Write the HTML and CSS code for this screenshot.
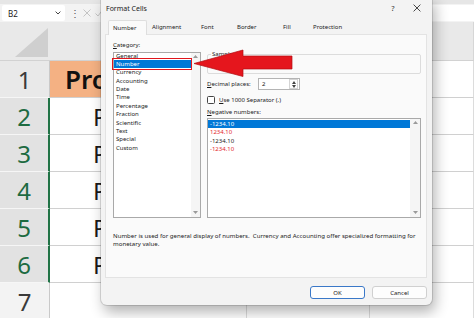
FILE: index.html
```html
<!DOCTYPE html>
<html>
<head>
<meta charset="utf-8">
<title>Format Cells</title>
<link rel="stylesheet" href="styles.css">
</head>
<body>
<div class="sheet">
  <div class="topstrip"></div>
  <div class="fbar">
    <div class="namebox"><span>B2</span>
      <svg class="chev" width="6" height="4" viewBox="0 0 6 4"><path d="M0.6 0.6 L3 3 L5.4 0.6" fill="none" stroke="#444" stroke-width="1"/></svg>
    </div>
    <span class="dots">⋮</span>
    <svg class="fxx" width="8" height="8" viewBox="0 0 8 8"><path d="M0.5 0.5 L7.5 7.5 M7.5 0.5 L0.5 7.5" stroke="#c4c4c4" stroke-width="1"/></svg>
    <svg class="fxv" width="8" height="8" viewBox="0 0 8 8"><path d="M0.5 4.5 L3 7 L7.5 1" fill="none" stroke="#c4c4c4" stroke-width="1"/></svg>
    <div class="finput"></div>
  </div>
  <div class="colhead">
    <div class="corner">
      <svg width="50" height="38" viewBox="0 0 50 38"><polygon points="48,6 48,35 15,35" fill="#cfcfcf"/></svg>
    </div>
    <div class="ch c1"></div><div class="ch c2"></div><div class="ch c3"></div>
  </div>
  <div class="row r1"><div class="rh">1</div><div class="cell c1 head">Product</div><div class="cell c2"></div><div class="cell c3"></div></div>
  <div class="row sel"><div class="rh">2</div><div class="cell c1 txt">Product A</div><div class="cell c2"></div><div class="cell c3"></div></div>
  <div class="row sel"><div class="rh">3</div><div class="cell c1 txt">Product B</div><div class="cell c2"></div><div class="cell c3"></div></div>
  <div class="row sel"><div class="rh">4</div><div class="cell c1 txt">Product C</div><div class="cell c2"></div><div class="cell c3"></div></div>
  <div class="row sel"><div class="rh">5</div><div class="cell c1 txt">Product D</div><div class="cell c2"></div><div class="cell c3"></div></div>
  <div class="row sel"><div class="rh">6</div><div class="cell c1 txt">Product E</div><div class="cell c2"></div><div class="cell c3"></div></div>
  <div class="row r7"><div class="rh">7</div><div class="cell c1"></div><div class="cell c2"></div><div class="cell c3"></div></div>
</div>

<div class="dialog">
  <div class="titlebar">
    <span class="title">Format Cells</span>
    <span class="help">?</span>
    <svg class="close" width="8" height="8" viewBox="0 0 8 8"><path d="M0.6 0.6 L7.4 7.4 M7.4 0.6 L0.6 7.4" stroke="#333" stroke-width="0.9"/></svg>
  </div>
  <div class="tabs">
    <div class="tab t1 sel">Number</div>
    <div class="tab t2">Alignment</div>
    <div class="tab t3">Font</div>
    <div class="tab t4">Border</div>
    <div class="tab t5">Fill</div>
    <div class="tab t6">Protection</div>
  </div>
  <div class="panel">
    <div class="cols">
      <div class="catcol">
        <div class="lbl"><u>C</u>ategory:</div>
        <div class="list catlist">
          <div class="items cat">
            <div class="it">General</div>
            <div class="it on">Number</div>
            <div class="it">Currency</div>
            <div class="it">Accounting</div>
            <div class="it">Date</div>
            <div class="it">Time</div>
            <div class="it">Percentage</div>
            <div class="it">Fraction</div>
            <div class="it">Scientific</div>
            <div class="it">Text</div>
            <div class="it">Special</div>
            <div class="it">Custom</div>
          </div>
          <div class="sbar">
            <svg width="5" height="3" viewBox="0 0 5 3"><polygon points="2.5,0 5,3 0,3" fill="#9a9a9a"/></svg>
            <svg width="5" height="3" viewBox="0 0 5 3"><polygon points="0,0 5,0 2.5,3" fill="#9a9a9a"/></svg>
          </div>
        </div>
      </div>
      <div class="rightcol">
        <div class="sample"><span class="legend">Sample</span></div>
        <div class="decrow">
          <span class="declbl"><u>D</u>ecimal places:</span>
          <div class="spin">
            <span class="val">2</span>
            <div class="spinbtns">
              <span class="sb"><svg width="4" height="3" viewBox="0 0 4 3"><polygon points="2,0 4,3 0,3" fill="#444"/></svg></span>
              <span class="sb"><svg width="4" height="3" viewBox="0 0 4 3"><polygon points="0,0 4,0 2,3" fill="#444"/></svg></span>
            </div>
          </div>
        </div>
        <div class="chkrow"><span class="chk"></span><span><u>U</u>se 1000 Separator (,)</span></div>
        <div class="lbl neglbl"><u>N</u>egative numbers:</div>
        <div class="list neglist">
          <div class="items neg">
            <div class="it on">-1234.10</div>
            <div class="it red">1234.10</div>
            <div class="it">-1234.10</div>
            <div class="it red">-1234.10</div>
          </div>
          <div class="sbar wide">
            <svg width="5" height="3" viewBox="0 0 5 3"><polygon points="2.5,0 5,3 0,3" fill="#9a9a9a"/></svg>
            <svg width="5" height="3" viewBox="0 0 5 3"><polygon points="0,0 5,0 2.5,3" fill="#9a9a9a"/></svg>
          </div>
        </div>
      </div>
    </div>
    <p class="desc">Number is used for general display of numbers.&nbsp; Currency and Accounting offer specialized formatting for<br>monetary value.</p>
  </div>
  <div class="footer">
    <button class="btn ok">OK</button>
    <button class="btn">Cancel</button>
  </div>
</div>

<div class="redbox"></div>
<svg class="arrow" width="104" height="32" viewBox="0 0 104 32">
  <polygon points="2,15.5 51,2 51,8 100,8 100,21 51,21 51,28.5" fill="#e5161d" stroke="#b10d12" stroke-width="0.7" stroke-linejoin="miter"/>
</svg>
</body>
</html>
```

FILE: styles.css
```css
* { box-sizing: border-box; }

body {
  margin: 0;
  width: 474px;
  height: 318px;
  overflow: hidden;
  position: relative;
  background: #ffffff;
  font-family: "Noto Sans", "Open Sans", sans-serif;
}

/* ---------- spreadsheet background ---------- */
.sheet {
  display: flex;
  flex-direction: column;
}

.topstrip {
  height: 4px;
  background: #e6e6e6;
}

.fbar {
  height: 18px;
  display: flex;
  align-items: center;
  background: #f3f3f3;
}

.namebox {
  width: 63px;
  height: 16px;
  margin-left: 2px;
  background: #ffffff;
  border-radius: 2px;
  display: flex;
  align-items: center;
  justify-content: space-between;
  padding: 0 4px 0 6px;
  font-size: 8px;
  color: #222;
}

.dots {
  margin-left: 5px;
  font-size: 10px;
  color: #555;
  width: 6px;
}

.fxx { margin-left: 7px; }
.fxv { margin-left: 4px; }

.finput {
  flex: 1;
  height: 16px;
  margin-left: 10px;
  background: #ffffff;
}

.colhead {
  height: 39px;
  display: flex;
  background: #e9e9e9;
  border-bottom: 1px solid #d2d2d2;
}

.corner {
  width: 50px;
  display: flex;
  align-items: flex-end;
}

.ch { border-right: 1px solid #d6d6d6; }
.c1 { width: 197px; }
.c2 { width: 123px; }
.c3 { flex: 1; }

.row {
  height: 37px;
  display: flex;
}

.rh {
  width: 50px;
  display: flex;
  align-items: center;
  justify-content: center;
  font-size: 24px;
  color: #3a3a3a;
  background: #e9e9e9;
  border-bottom: 1px solid #f6f6f6;
  border-right: 1px solid #c9c9c9;
}

.row.sel .rh {
  color: #1d6b41;
  background: #e2e2e2;
  border-right: 2px solid #217346;
}

.row.r7 .rh { background: #f3f3f3; }

.cell {
  border-right: 1px solid #dcdcdc;
  border-bottom: 1px solid #d0d0d0;
  display: flex;
  align-items: center;
  white-space: nowrap;
  overflow: hidden;
}

.cell.head {
  background: #f4b183;
  padding-left: 15px;
  font-size: 26px;
  font-weight: 600;
  color: #111;
}

.cell.txt {
  padding-left: 43px;
  font-size: 24px;
  color: #1a1a1a;
}

/* ---------- dialog ---------- */
.dialog {
  position: absolute;
  left: 101px;
  top: -4px;
  width: 331px;
  height: 309px;
  background: #f3f3f3;
  border-radius: 0 0 6px 6px;
  box-shadow: 0 0 0 1px rgba(0, 0, 0, 0.12), 3px 7px 14px rgba(0, 0, 0, 0.3);
  display: flex;
  flex-direction: column;
  font-size: 6px;
  color: #1b1b1b;
}

.titlebar {
  height: 24px;
  display: flex;
  align-items: center;
  padding-left: 5px;
}

.title {
  flex: 1;
  font-size: 7px;
}

.help {
  width: 12px;
  margin-right: 14px;
  text-align: center;
  font-size: 7.5px;
  color: #333;
}

.close {
  margin-right: 11px;
}

.tabs {
  height: 14px;
  display: flex;
  padding-left: 7px;
}

.tab {
  display: flex;
  align-items: center;
  padding-left: 5px;
  white-space: nowrap;
}

.tab.sel {
  padding-left: 4px;
  background: #fafafa;
  border: 1px solid #dedede;
  border-bottom: none;
  border-radius: 2px 2px 0 0;
  margin-bottom: -1px;
  position: relative;
  z-index: 1;
}

.t1 { width: 39px; }
.t2 { width: 49px; }
.t3 { width: 36px; }
.t4 { width: 46px; }
.t5 { width: 30px; }
.t6 { width: 39px; }

.panel {
  margin: 0 5px 0 4px;
  height: 244px;
  border: 1px solid #e3e3e3;
  background: #fafafa;
  padding: 6px 5px 0 7px;
}

.cols {
  display: flex;
  gap: 6px;
}

.catcol {
  width: 88px;
  display: flex;
  flex-direction: column;
}

.lbl {
  height: 9px;
  line-height: 9px;
  white-space: nowrap;
}

u {
  text-decoration: underline;
  text-underline-offset: 0.5px;
  text-decoration-thickness: 0.5px;
}

.list {
  background: #ffffff;
  border: 1px solid #a9a9a9;
  display: flex;
  overflow: hidden;
}

.catlist {
  margin-top: 2px;
  height: 166px;
}

.items {
  flex: 1;
  display: flex;
  flex-direction: column;
}

.items.cat { margin-top: -1.5px; }
.items.neg { margin-top: 1px; }

.it {
  flex: none;
  height: 8.4px;
  line-height: 8.4px;
  padding-left: 2px;
  white-space: nowrap;
  overflow: hidden;
}

.it.on {
  background: #0078d7;
  color: #ffffff;
}

.it.red { color: #e3272b; }

.sbar {
  width: 9px;
  background: #f5f5f5;
  display: flex;
  flex-direction: column;
  justify-content: space-between;
  align-items: center;
  padding: 2px 0 3px;
}

.sbar.wide { width: 10px; }

.rightcol {
  flex: 1;
  display: flex;
  flex-direction: column;
}

.sample {
  margin-top: 13px;
  height: 20px;
  border: 1px solid #dcdcdc;
  border-radius: 2px;
}

.legend {
  display: inline-block;
  vertical-align: top;
  margin: -5px 0 0 3px;
  padding: 0 1px;
  line-height: 8px;
  background: #fafafa;
}

.decrow {
  margin-top: 4px;
  height: 12px;
  display: flex;
  align-items: center;
}

.declbl {
  width: 51px;
  white-space: nowrap;
}

.spin {
  width: 42px;
  height: 12px;
  border: 1px solid #b4b4b4;
  background: #ffffff;
  display: flex;
  align-items: center;
}

.val {
  flex: 1;
  padding-left: 3px;
}

.spinbtns {
  width: 9px;
  height: 10px;
  margin-right: 1px;
  border: 1px solid #d4d4d4;
  display: flex;
  flex-direction: column;
}

.sb {
  flex: 1;
  display: flex;
  align-items: center;
  justify-content: center;
}

.chkrow {
  margin-top: 6px;
  height: 8px;
  display: flex;
  align-items: center;
  gap: 4px;
  white-space: nowrap;
}

.chk {
  width: 8px;
  height: 8px;
  border: 1px solid #444;
  border-radius: 1.5px;
  background: #ffffff;
}

.neglbl { margin-top: 4px; }

.neglist {
  margin-top: 1px;
  height: 100px;
}

.desc {
  margin: 14px 0 0;
  font-size: 6.1px;
  line-height: 8.4px;
  white-space: nowrap;
}

.footer {
  flex: 1;
  display: flex;
  justify-content: flex-end;
  align-items: flex-start;
  gap: 7px;
  padding: 8px 5px 0 0;
}

.btn {
  width: 55px;
  height: 13px;
  padding: 0;
  font-family: inherit;
  font-size: 6px;
  color: #1b1b1b;
  background: #fdfdfd;
  border: 1px solid #d0d0d0;
  border-radius: 3px;
}

.btn.ok {
  border-color: #3a78c8;
}

/* ---------- annotations ---------- */
.redbox {
  position: absolute;
  left: 112px;
  top: 58px;
  width: 80px;
  height: 12px;
  border: 1.5px solid #e1161d;
}

.arrow {
  position: absolute;
  left: 192px;
  top: 48px;
}
```
